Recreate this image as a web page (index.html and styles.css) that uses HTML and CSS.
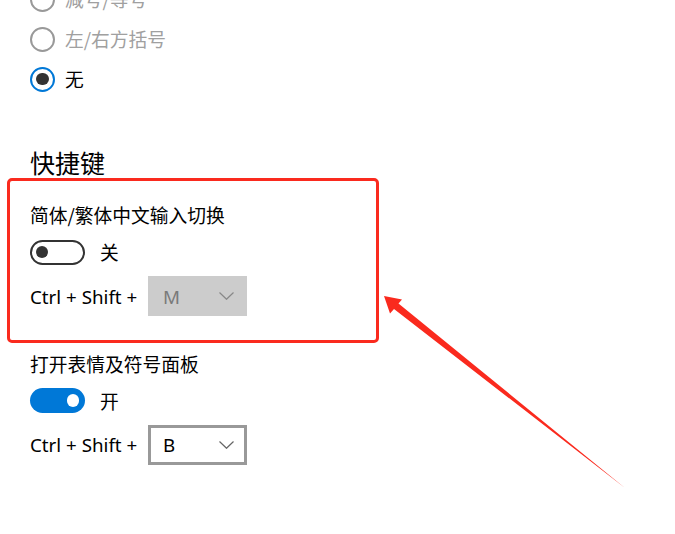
FILE: index.html
```html
<!DOCTYPE html>
<html lang="zh-CN">
<head>
<meta charset="utf-8">
<title>快捷键</title>
<link rel="stylesheet" href="styles.css">
</head>
<body>
<main class="page">
  <div class="radios">
    <div class="radio-row disabled"><span class="radio"></span><span class="radio-label">减号/等号</span></div>
    <div class="radio-row disabled"><span class="radio"></span><span class="radio-label">左/右方括号</span></div>
    <div class="radio-row"><span class="radio checked"></span><span class="radio-label">无</span></div>
  </div>

  <h2 class="heading">快捷键</h2>

  <section class="setting">
    <div class="label">简体/繁体中文输入切换</div>
    <div class="toggle-row"><span class="toggle off"><span class="knob"></span></span><span class="toggle-text">关</span></div>
    <div class="combo-row">
      <span class="keys">Ctrl + Shift +</span>
      <div class="combo disabled"><span class="combo-value">M</span>
        <svg class="chev" width="15" height="8" viewBox="0 0 15 8"><path d="M0.5 0.5 L7.5 7.3 L14.5 0.5" fill="none" stroke="currentColor" stroke-width="1.2"/></svg>
      </div>
    </div>
  </section>

  <section class="setting second">
    <div class="label">打开表情及符号面板</div>
    <div class="toggle-row"><span class="toggle on"><span class="knob"></span></span><span class="toggle-text">开</span></div>
    <div class="combo-row">
      <span class="keys">Ctrl + Shift +</span>
      <div class="combo"><span class="combo-value">B</span>
        <svg class="chev" width="15" height="8" viewBox="0 0 15 8"><path d="M0.5 0.5 L7.5 7.3 L14.5 0.5" fill="none" stroke="currentColor" stroke-width="1.2"/></svg>
      </div>
    </div>
  </section>
</main>

<div class="highlight"></div>
<svg class="arrow" width="675" height="534" viewBox="0 0 675 534">
  <polygon points="384,296 402,299.5 398.5,303.5 625,488 394,309 390,313.5" fill="#fa2a1e"/>
</svg>
</body>
</html>
```

FILE: styles.css
```css
html, body {
  margin: 0;
  padding: 0;
  background: #fff;
}
body {
  width: 675px;
  height: 534px;
  overflow: hidden;
  position: relative;
  font-family: "Noto Sans", "Noto Sans CJK SC", sans-serif;
  font-size: 18.75px;
  color: #000;
}
.page {
  padding-left: 30px;
}
.radios {
  margin-top: -21px;
}
.radio-row {
  height: 40px;
  display: flex;
  align-items: center;
}
.radio {
  box-sizing: border-box;
  width: 25px;
  height: 25px;
  border-radius: 50%;
  border: 2.5px solid #999;
  display: flex;
  align-items: center;
  justify-content: center;
  flex: none;
}
.radio.checked {
  border-color: #0078d7;
}
.radio.checked::after {
  content: "";
  width: 12.5px;
  height: 12.5px;
  border-radius: 50%;
  background: #333;
}
.radio-label {
  margin-left: 10px;
  font-family: "Noto Sans CJK SC", sans-serif;
  line-height: 26px;
}
.radio-row.disabled .radio-label {
  color: #a0a0a0;
}
.heading {
  margin: 46px 0 0;
  font-weight: normal;
  font-size: 25px;
  line-height: 35px;
  font-family: "Noto Sans CJK SC", sans-serif;
}
.setting {
  margin-top: 22px;
  display: flex;
  flex-direction: column;
  gap: 11.5px;
}
.setting.second {
  margin-top: 34.5px;
}
.label {
  line-height: 26px;
  font-family: "Noto Sans CJK SC", sans-serif;
}
.toggle-row {
  display: flex;
  align-items: center;
  height: 25px;
}
.toggle {
  box-sizing: border-box;
  width: 55px;
  height: 25px;
  border-radius: 12.5px;
  display: flex;
  align-items: center;
  padding: 0 3.5px;
  flex: none;
}
.toggle.off {
  border: 2.5px solid #333;
}
.toggle.on {
  background: #0078d7;
  justify-content: flex-end;
  padding: 0 6px;
}
.knob {
  width: 12.5px;
  height: 12.5px;
  border-radius: 50%;
  background: #333;
}
.toggle.on .knob {
  background: #fff;
}
.toggle-text {
  margin-left: 15px;
  font-family: "Noto Sans CJK SC", sans-serif;
  line-height: 26px;
}
.combo-row {
  display: flex;
  align-items: center;
  height: 40px;
}
.keys {
  width: 118px;
  flex: none;
}
.combo {
  box-sizing: border-box;
  width: 99px;
  height: 40px;
  border: 3px solid #999;
  background: #fff;
  display: flex;
  align-items: center;
  justify-content: space-between;
  padding: 0 10px 0 12px;
  color: #666;
}
.combo.disabled {
  border-color: #ccc;
  background: #ccc;
  color: #888;
}
.combo-value {
  color: #000;
}
.combo.disabled .combo-value {
  color: #7a7a7a;
}
.highlight {
  position: absolute;
  left: 7px;
  top: 178px;
  width: 372px;
  height: 165px;
  box-sizing: border-box;
  border: 3px solid #fa2a1e;
  border-radius: 5px;
}
.arrow {
  position: absolute;
  left: 0;
  top: 0;
}
```
